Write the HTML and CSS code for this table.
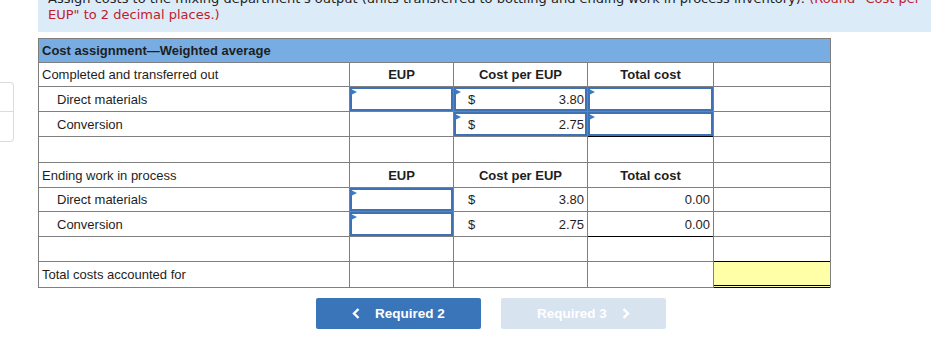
FILE: index.html
```html
<!DOCTYPE html>
<html lang="en">
<head>
<meta charset="utf-8">
<title>Cost assignment</title>
<link rel="stylesheet" href="styles.css">
</head>
<body>
<div class="page">
  <div class="side">
    <div class="tab tab-top"></div>
    <div class="tab tab-bottom"></div>
  </div>
  <div class="main">
    <div class="banner">Assign costs to the mixing department's output (units transferred to bottling and ending work in process inventory). <span class="red">(Round "Cost per</span><br><span class="red">EUP" to 2 decimal places.)</span></div>

    <div class="grid">
      <div class="cell head span5">Cost assignment—Weighted average</div>

      <div class="cell label">Completed and transferred out</div>
      <div class="cell colhead">EUP</div>
      <div class="cell colhead">Cost per EUP</div>
      <div class="cell colhead">Total cost</div>
      <div class="cell"></div>

      <div class="cell label indent">Direct materials</div>
      <div class="cell inp"></div>
      <div class="cell inp money"><span>$</span><span>3.80</span></div>
      <div class="cell inp"></div>
      <div class="cell"></div>

      <div class="cell label indent">Conversion</div>
      <div class="cell"></div>
      <div class="cell inp money"><span>$</span><span>2.75</span></div>
      <div class="cell inp underline"></div>
      <div class="cell"></div>

      <div class="cell"></div>
      <div class="cell"></div>
      <div class="cell"></div>
      <div class="cell"></div>
      <div class="cell"></div>

      <div class="cell label">Ending work in process</div>
      <div class="cell colhead">EUP</div>
      <div class="cell colhead">Cost per EUP</div>
      <div class="cell colhead">Total cost</div>
      <div class="cell"></div>

      <div class="cell label indent">Direct materials</div>
      <div class="cell inp"></div>
      <div class="cell money"><span>$</span><span>3.80</span></div>
      <div class="cell num">0.00</div>
      <div class="cell"></div>

      <div class="cell label indent">Conversion</div>
      <div class="cell inp"></div>
      <div class="cell money"><span>$</span><span>2.75</span></div>
      <div class="cell num underline">0.00</div>
      <div class="cell"></div>

      <div class="cell"></div>
      <div class="cell"></div>
      <div class="cell"></div>
      <div class="cell"></div>
      <div class="cell"></div>

      <div class="cell label">Total costs accounted for</div>
      <div class="cell"></div>
      <div class="cell"></div>
      <div class="cell"></div>
      <div class="cell total"></div>
    </div>

    <div class="nav">
      <button class="btn btn-prev" type="button">
        <svg class="chev" width="8" height="11" viewBox="0 0 8 11"><polyline points="6.5,1 2,5.5 6.5,10" fill="none" stroke="#fff" stroke-width="2.4"/></svg>
        <span>Required 2</span>
      </button>
      <button class="btn btn-next" type="button">
        <span>Required 3</span>
        <svg class="chev" width="8" height="11" viewBox="0 0 8 11"><polyline points="1.5,1 6,5.5 1.5,10" fill="none" stroke="#fff" stroke-width="2.4"/></svg>
      </button>
    </div>
  </div>
</div>
</body>
</html>
```

FILE: styles.css
```css
html, body {
  margin: 0;
  padding: 0;
  background: #ffffff;
  overflow: hidden;
}

.page {
  display: flex;
  align-items: flex-start;
  width: 931px;
  height: 343px;
  overflow: hidden;
}

.side {
  width: 14px;
  margin-top: 82px;
  display: flex;
  flex-direction: column;
}

.tab {
  box-sizing: border-box;
  height: 30px;
  border: 1px solid #dcdcdc;
  border-left: none;
}

.tab-top {
  border-top-right-radius: 4px;
}

.tab-bottom {
  height: 30px;
  border-top: none;
  border-bottom-right-radius: 4px;
}

.main {
  flex: 1;
  margin-left: 24px;
  min-width: 0;
}

.banner {
  margin-top: -17px;
  padding: 8px 10px 9px 10px;
  background: #dcebf8;
  font-family: "DejaVu Sans", Verdana, sans-serif;
  font-size: 13px;
  line-height: 16px;
  color: #222222;
  white-space: nowrap;
  overflow: hidden;
}

.red {
  color: #c0202c;
}

.grid {
  margin-top: 6px;
  display: grid;
  width: 793px;
  box-sizing: border-box;
  grid-template-columns: 310px 103px 133px 125px 116px;
  grid-template-rows: 23px 23px 24px 24px 25px 24px 23px 24px 24px 25px;
  gap: 1px;
  padding: 0;
  border: 1px solid #7f7f7f;
  background: #7f7f7f;
  font-family: "Liberation Sans", Arial, sans-serif;
  font-size: 13px;
  color: #1e1e1e;
}

.cell {
  position: relative;
  background: #ffffff;
  display: flex;
  align-items: center;
  box-sizing: border-box;
  padding: 0 3px;
  min-width: 0;
}

.span5 {
  grid-column: 1 / span 5;
}

.head {
  background: #78ade3;
  font-weight: bold;
  padding-left: 3px;
}

.label {
  padding-left: 3px;
}

.indent {
  padding-left: 18px;
}

.colhead {
  justify-content: center;
  font-weight: bold;
}

.inp {
  border: 2px solid #3d72b5;
}

.inp::before {
  content: "";
  position: absolute;
  left: -1px;
  top: 0;
  width: 0;
  height: 0;
  border-left: 6px solid #3d7ac4;
  border-top: 3px solid transparent;
  border-bottom: 3px solid transparent;
}

.money {
  justify-content: space-between;
  padding-left: 14px;
  padding-right: 3px;
}

.money.inp {
  padding-left: 12px;
  padding-right: 1px;
}

.num {
  justify-content: flex-end;
  padding-right: 3px;
}

.underline {
  box-shadow: 0 1px 0 #000000;
}

.total {
  background: #ffffa8;
  box-shadow: inset 0 -1px 0 #ffffa8, inset 0 -2px 0 #000000, 0 -1px 0 #000000, 0 1px 0 #000000;
}

.nav {
  display: flex;
  gap: 20px;
  margin-top: 10px;
  padding-left: 278px;
}

.btn {
  width: 165px;
  height: 31px;
  border: none;
  border-radius: 2px;
  display: flex;
  align-items: center;
  justify-content: center;
  gap: 15px;
  font-family: "Liberation Sans", Arial, sans-serif;
  font-size: 13.5px;
  font-weight: bold;
  color: #ffffff;
  padding: 0;
}

.btn-prev {
  background: #3a75b9;
}

.btn-next {
  background: #d8e3f0;
}

.chev {
  display: block;
}
```
